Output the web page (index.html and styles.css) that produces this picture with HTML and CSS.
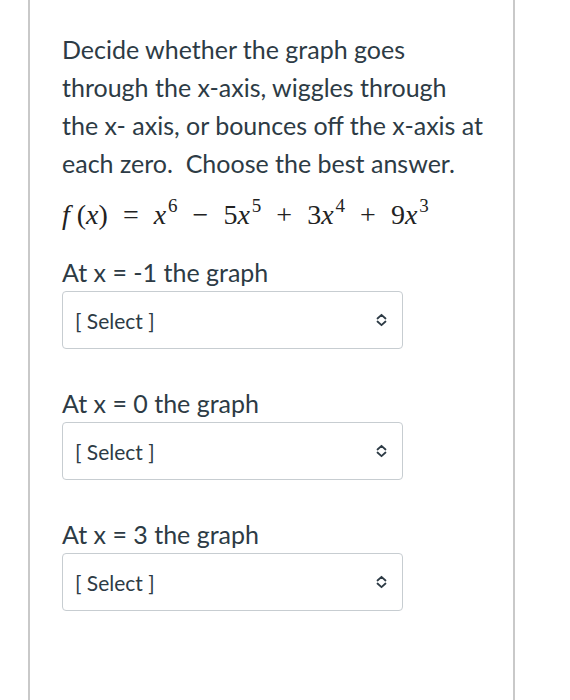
FILE: index.html
```html
<!DOCTYPE html>
<html lang="en">
<head>
<meta charset="utf-8">
<link rel="stylesheet" href="styles.css">
</head>
<body>
<div class="card">
  <p class="prompt">Decide whether the graph goes through the x-axis, wiggles through the x- axis, or bounces off the x-axis at each zero.&nbsp; Choose the best answer.</p>
  <div class="formula"><span class="v">f</span><span class="sp"></span>(<span class="v">x</span>)<span class="op">=</span><span class="v">x</span><sup>6</sup><span class="op">&minus;</span>5<span class="v">x</span><sup>5</sup><span class="op">+</span>3<span class="v">x</span><sup>4</sup><span class="op">+</span>9<span class="v">x</span><sup>3</sup></div>

  <div class="question first">
    <div class="label">At x = -1 the graph</div>
    <div class="select"><span>[ Select ]</span><svg class="chev" width="11" height="14" viewBox="0 0 11 14"><path d="M1.5 5.5 L5.5 1.8 L9.5 5.5 M1.5 8.5 L5.5 12.2 L9.5 8.5" fill="none" stroke="#2d3b45" stroke-width="1.8" stroke-linecap="round" stroke-linejoin="round"/></svg></div>
  </div>
  <div class="question">
    <div class="label">At x = 0 the graph</div>
    <div class="select"><span>[ Select ]</span><svg class="chev" width="11" height="14" viewBox="0 0 11 14"><path d="M1.5 5.5 L5.5 1.8 L9.5 5.5 M1.5 8.5 L5.5 12.2 L9.5 8.5" fill="none" stroke="#2d3b45" stroke-width="1.8" stroke-linecap="round" stroke-linejoin="round"/></svg></div>
  </div>
  <div class="question">
    <div class="label">At x = 3 the graph</div>
    <div class="select"><span>[ Select ]</span><svg class="chev" width="11" height="14" viewBox="0 0 11 14"><path d="M1.5 5.5 L5.5 1.8 L9.5 5.5 M1.5 8.5 L5.5 12.2 L9.5 8.5" fill="none" stroke="#2d3b45" stroke-width="1.8" stroke-linecap="round" stroke-linejoin="round"/></svg></div>
  </div>
</div>
</body>
</html>
```
FILE: styles.css
```css
html, body {
  margin: 0;
  padding: 0;
  background: #ffffff;
}
body {
  font-family: Lato, "Open Sans", sans-serif;
  color: #2d3b45;
}
.card {
  margin-left: 28px;
  width: 487px;
  min-height: 700px;
  box-sizing: border-box;
  border-left: 2px solid #c9c9c9;
  border-right: 2px solid #c9c9c9;
  padding: 30px 29px 0 32px;
}
.prompt {
  margin: 0;
  font-size: 25px;
  line-height: 38px;
}
.formula {
  margin-top: 14px;
  height: 38px;
  line-height: 38px;
  font-family: "Liberation Serif", "DejaVu Serif", serif;
  font-size: 28px;
  color: #222;
  white-space: nowrap;
}
.formula .v {
  font-style: italic;
}
.formula .sp {
  display: inline-block;
  width: 7px;
}
.formula .op {
  display: inline-block;
  margin: 0 15px;
}
.formula sup {
  font-size: 19px;
  line-height: 0;
  vertical-align: 12px;
  margin-left: 2px;
}
.question {
  margin-top: 35px;
}
.question.first {
  margin-top: 19px;
}
.label {
  font-size: 25px;
  line-height: 38px;
}
.select {
  box-sizing: border-box;
  width: 341px;
  height: 58px;
  border: 1px solid #c7cdd1;
  border-radius: 4px;
  display: flex;
  align-items: center;
  justify-content: space-between;
  padding: 0 15px 0 12px;
  font-size: 21px;
}
.chev {
  display: block;
}
```
